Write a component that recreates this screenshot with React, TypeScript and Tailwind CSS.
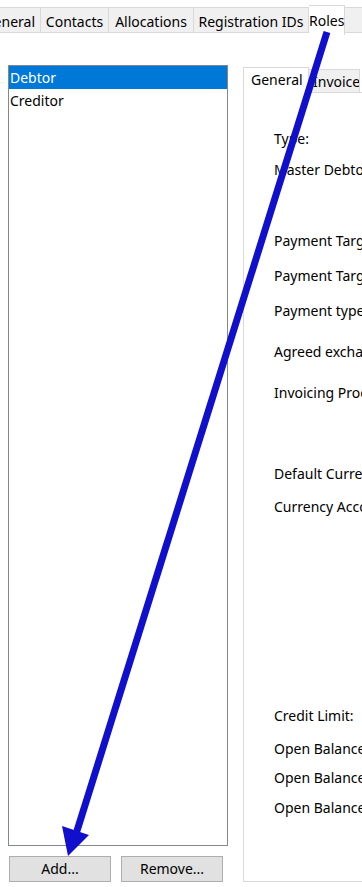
import React from 'react'

const FONT = { fontFamily: '"Noto Sans", "Open Sans", Arial, sans-serif' }

const LABELS: { text: string; mt: string }[] = [
  { text: 'Type:', mt: 'mt-[36px]' },
  { text: 'Master Debtor', mt: 'mt-[11px]' },
  { text: 'Payment Target', mt: 'mt-[51px]' },
  { text: 'Payment Target Discount', mt: 'mt-[15px]' },
  { text: 'Payment type', mt: 'mt-[15px]' },
  { text: 'Agreed exchange rate', mt: 'mt-[21px]' },
  { text: 'Invoicing Procedure', mt: 'mt-[21px]' },
  { text: 'Default Currency', mt: 'mt-[61px]' },
  { text: 'Currency Account', mt: 'mt-[13px]' },
  { text: 'Credit Limit:', mt: 'mt-[189px]' },
  { text: 'Open Balance', mt: 'mt-[13px]' },
  { text: 'Open Balance Due', mt: 'mt-[9px]' },
  { text: 'Open Balance Overdue', mt: 'mt-[10px]' },
]

function Tab({ label, className = '' }: { label: string; className?: string }) {
  return (
    <div
      className={`h-[26px] flex items-center justify-center pt-[3px] bg-[#f0f0f0] border border-l-0 border-[#d9d9d9] whitespace-nowrap ${className}`}
    >
      {label}
    </div>
  )
}

export default function App() {
  return (
    <div
      className="relative w-[362px] h-[887px] overflow-hidden bg-white text-[14px] text-black leading-[20px]"
      style={FONT}
    >
      {/* outer tab strip */}
      <div className="h-[35px] flex items-end overflow-hidden">
        <div className="mb-[2px] flex items-end">
          <div className="h-[26px] w-[41px] flex items-center justify-end pr-[5px] pt-[3px] bg-[#f0f0f0] border border-l-0 border-[#d9d9d9] overflow-hidden whitespace-nowrap">
            General
          </div>
          <Tab label="Contacts" className="w-[68px]" />
          <Tab label="Allocations" className="w-[85px]" />
          <Tab label="Registration IDs" className="w-[115px]" />
        </div>
        <div className="h-[30px] w-[50px] flex items-start justify-center pt-[5px] bg-white border border-b-0 border-l-0 border-[#d9d9d9]">
          Roles
        </div>
        <div className="mb-[2px] flex items-end">
          <Tab label="" className="w-[60px]" />
        </div>
      </div>

      <div className="flex pl-[8px]">
        {/* left column */}
        <div className="w-[220px] flex flex-col pt-[30px]">
          <div className="h-[781px] border border-[#828790] bg-white">
            <div className="h-[23px] bg-[#0078d7] text-white pl-[1px] flex items-center">Debtor</div>
            <div className="h-[23px] pl-[1px] flex items-center">Creditor</div>
          </div>
          <div className="mt-[10px] flex gap-[10px] pl-[1px]">
            <button className="w-[102px] h-[26px] bg-[#e1e1e1] border border-[#adadad] flex items-center justify-center">
              Add...
            </button>
            <button className="w-[102px] h-[26px] bg-[#e1e1e1] border border-[#adadad] flex items-center justify-center">
              Remove...
            </button>
          </div>
        </div>

        {/* right panel */}
        <div className="ml-[15px] flex-1 pt-[32px] flex flex-col min-w-0">
          <div className="h-[26px] flex items-end">
            <div className="h-[26px] w-[66px] bg-white border border-b-0 border-[#d9d9d9] pl-[7px] flex items-start pt-[2px]">
              General
            </div>
            <div className="h-[24px] w-[51px] bg-[#f0f0f0] border border-l-0 border-[#d9d9d9] flex items-center pl-[4px] pt-[1px] whitespace-nowrap overflow-hidden">
              Invoice
            </div>
            <div className="flex-1 border-b border-[#d9d9d9]" />
          </div>
          <div className="h-[789px] border-l border-b border-[#d9d9d9] pl-[30px] flex flex-col overflow-hidden">
            {LABELS.map((l, i) => (
              <div key={i} className={`h-[20px] whitespace-nowrap ${l.mt}`}>
                {l.text}
              </div>
            ))}
          </div>
        </div>
      </div>

      {/* annotation arrow */}
      <svg className="absolute inset-0 pointer-events-none" width="362" height="887" viewBox="0 0 362 887">
        <line x1="327" y1="32" x2="76" y2="834" stroke="#1010cc" strokeWidth="7" />
        <polygon points="62,826 89,835 68,856" fill="#1010cc" />
      </svg>
    </div>
  )
}
